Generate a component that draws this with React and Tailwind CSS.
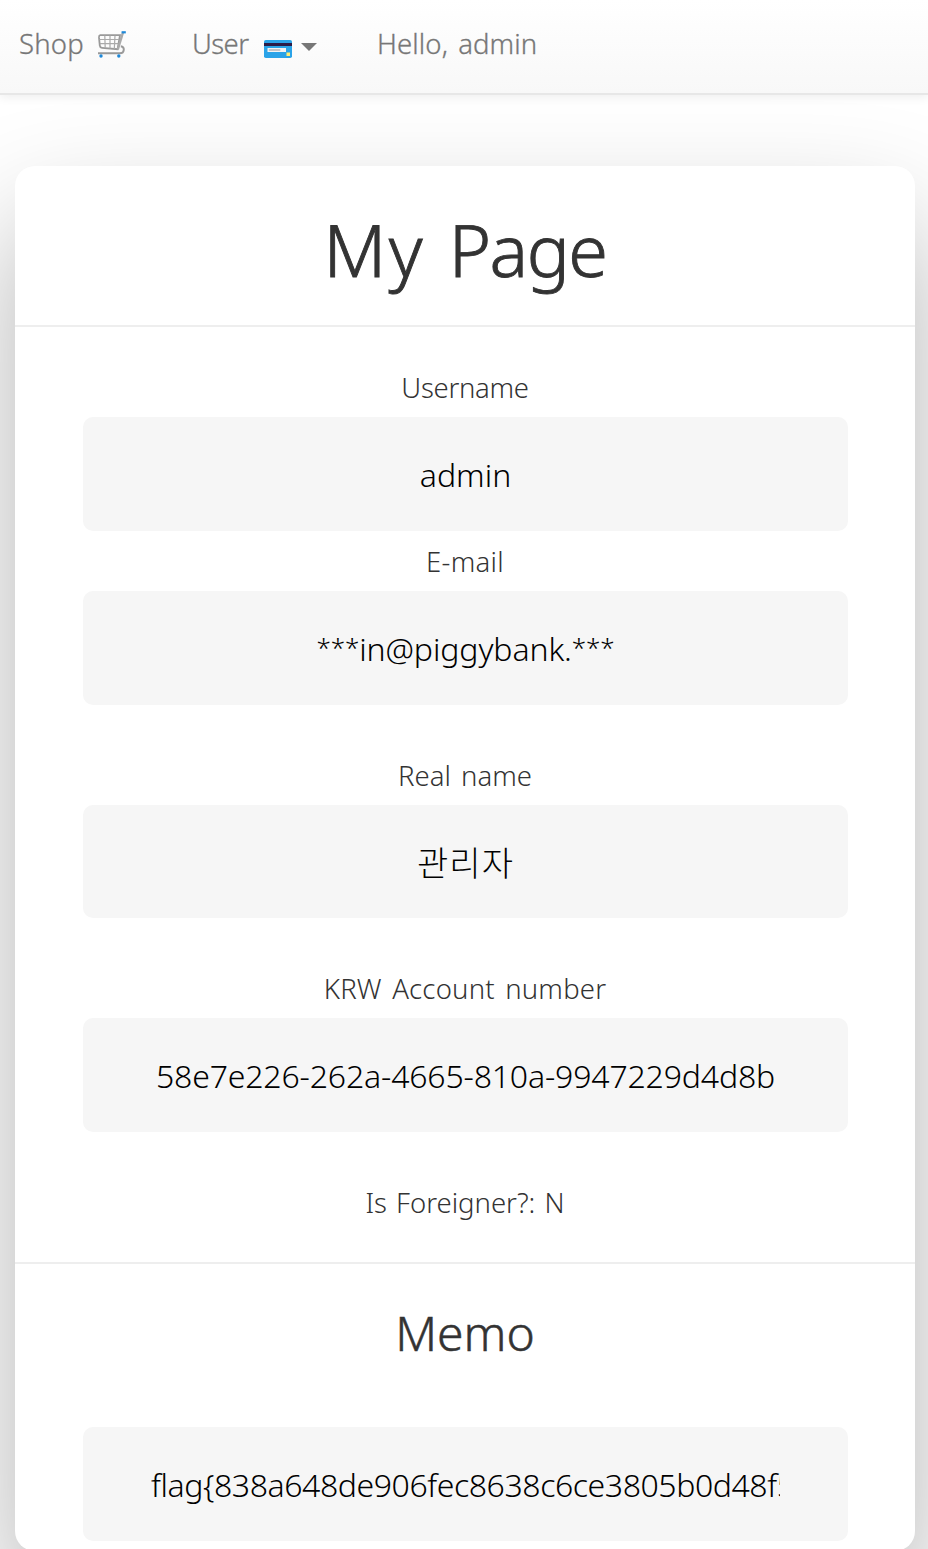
const CartIcon = () => (
  <svg width="30" height="30" viewBox="0 0 30 30" fill="none" className="shrink-0">
    <path d="M3.2 4.2H23L20.6 18.2L5 16.8Q3 16.6 2.8 14.6L2 6.4Q1.9 4.4 3.2 4.2Z" stroke="#999" strokeWidth="1.8" />
    <path d="M7.8 4.5L8.2 17M13 4.5V17.5M18 4.5L17.3 18M2.5 8.5H22M3 12.7H21.2" stroke="#aaa" strokeWidth="1.2" />
    <path d="M26 1.5L20.8 18.5" stroke="#aaa" strokeWidth="2.4" />
    <path d="M23.8 15.2Q27 15.6 26.8 18.8Q26.5 22.2 23 22.2H1" stroke="#999" strokeWidth="1.9" />
    <path d="M24.6 0.2H28.8V2.4H24.6Z" fill="#1e88d8" />
    <circle cx="4" cy="25" r="1.7" fill="#1e88d8" />
    <circle cx="21.8" cy="25" r="1.7" fill="#1e88d8" />
  </svg>
);

const CardIcon = () => (
  <svg width="28" height="18" viewBox="0 0 28 18" className="shrink-0">
    <rect width="28" height="18" rx="1.8" fill="#2aa3e8" />
    <rect y="3" width="28" height="3" fill="#2c1c48" />
    <rect x="3.5" y="8" width="18.5" height="4" fill="#f4f4f4" />
    <rect x="4.8" y="9" width="11.5" height="2" fill="#c4c4c8" />
    <rect x="22.5" y="12.5" width="3.5" height="3.5" fill="#ffee75" />
  </svg>
);

const Stars = () => <span className="align-[4px] text-[26px] leading-none">***</span>;

const Field = ({ label, value, className = "", labelClass = "", valueClass = "", boxClass = "h-[114px]" }) => (
  <div className={className}>
    {label && (
      <div className="h-[60px] pt-[11px] text-center text-[27.5px] leading-10 text-[#333] [word-spacing:3px]">
        <span className={labelClass}>{label}</span>
      </div>
    )}
    <div className={`mx-[68px] w-[765px] rounded-[10px] bg-[#f6f6f6] px-[68px] pt-[34px] ${boxClass}`}>
      <div className="h-12 overflow-hidden text-center text-[32px] leading-[48px] whitespace-nowrap text-black">
        <span className={valueClass}>{value}</span>
      </div>
    </div>
  </div>
);

export default function App() {
  return (
    <div className="h-[1549px] overflow-hidden bg-white font-['Noto_Sans','Noto_Sans_CJK_KR',sans-serif] font-[350]">
      <nav className="relative z-10 flex h-[95px] items-start border-b-2 border-[#e7e7e7] bg-linear-to-b from-white to-[#f8f8f8] pt-6 pl-[18px] text-[27.5px] leading-10 text-[#777] shadow-[0_2px_10px_rgba(0,0,0,0.075)] [-webkit-text-stroke:0.3px_#777]">
        <a className="flex w-[174px]">
          <span className="w-[79px] pl-px tracking-[0.2px]">Shop</span>
          <span className="pt-[7px]"><CartIcon /></span>
        </a>
        <a className="flex w-[185px]">
          <span className="w-[71.5px] tracking-[-0.6px]">User</span>
          <span className="pt-4"><CardIcon /></span>
          <span className="mt-[19px] ml-[9.5px] h-0 w-0 border-x-8 border-t-8 border-x-transparent border-t-[#777]" />
        </a>
        <span className="tracking-[0.1px] [word-spacing:3px]">Hello, admin</span>
      </nav>

      <main className="mt-[71px] ml-[15px] h-[1385px] w-[900px] rounded-[20px] bg-white shadow-[0_60px_120px_rgba(0,0,0,0.3)]">
        <h1 className="h-[161px] border-b-2 border-[#eee] pt-[33px] text-center text-[72px] leading-[100px] text-[#333] [-webkit-text-stroke:0.9px_#333] [word-spacing:5px]">
          <span className="tracking-[2.5px]">My</span> <span className="tracking-[-1.5px]">Page</span>
        </h1>
        <Field className="pt-[30px]" label="Username" labelClass="tracking-[-0.3px]" value="admin" />
        <Field
          label="E-mail"
          labelClass="tracking-[0.3px]"
          value={<><Stars />in@piggybank.<Stars /></>}
          valueClass="tracking-[-0.1px]"
        />
        <Field
          className="pt-10"
          label="Real name"
          value="관리자"
          valueClass="font-light text-[34px] tracking-[1px]"
          boxClass="h-[113px]"
        />
        <Field
          className="pt-10"
          label="KRW Account number"
          labelClass="tracking-[0.2px]"
          value="58e7e226-262a-4665-810a-9947229d4d8b"
          valueClass="tracking-[-0.17px]"
        />
        <p className="h-[132px] border-b-2 border-[#eee] pt-[51px] text-center text-[27.5px] leading-10 text-[#333] [word-spacing:2px]">
          Is Foreigner?: N
        </p>
        <h2 className="h-[163px] pt-[36px] text-center text-[48px] leading-[66px] text-[#333] [-webkit-text-stroke:0.5px_#333]">
          Memo
        </h2>
        <Field value="flag{838a648de906fec8638c6ce3805b0d48f5" valueClass="tracking-[-0.43px]" />
      </main>
    </div>
  );
}
